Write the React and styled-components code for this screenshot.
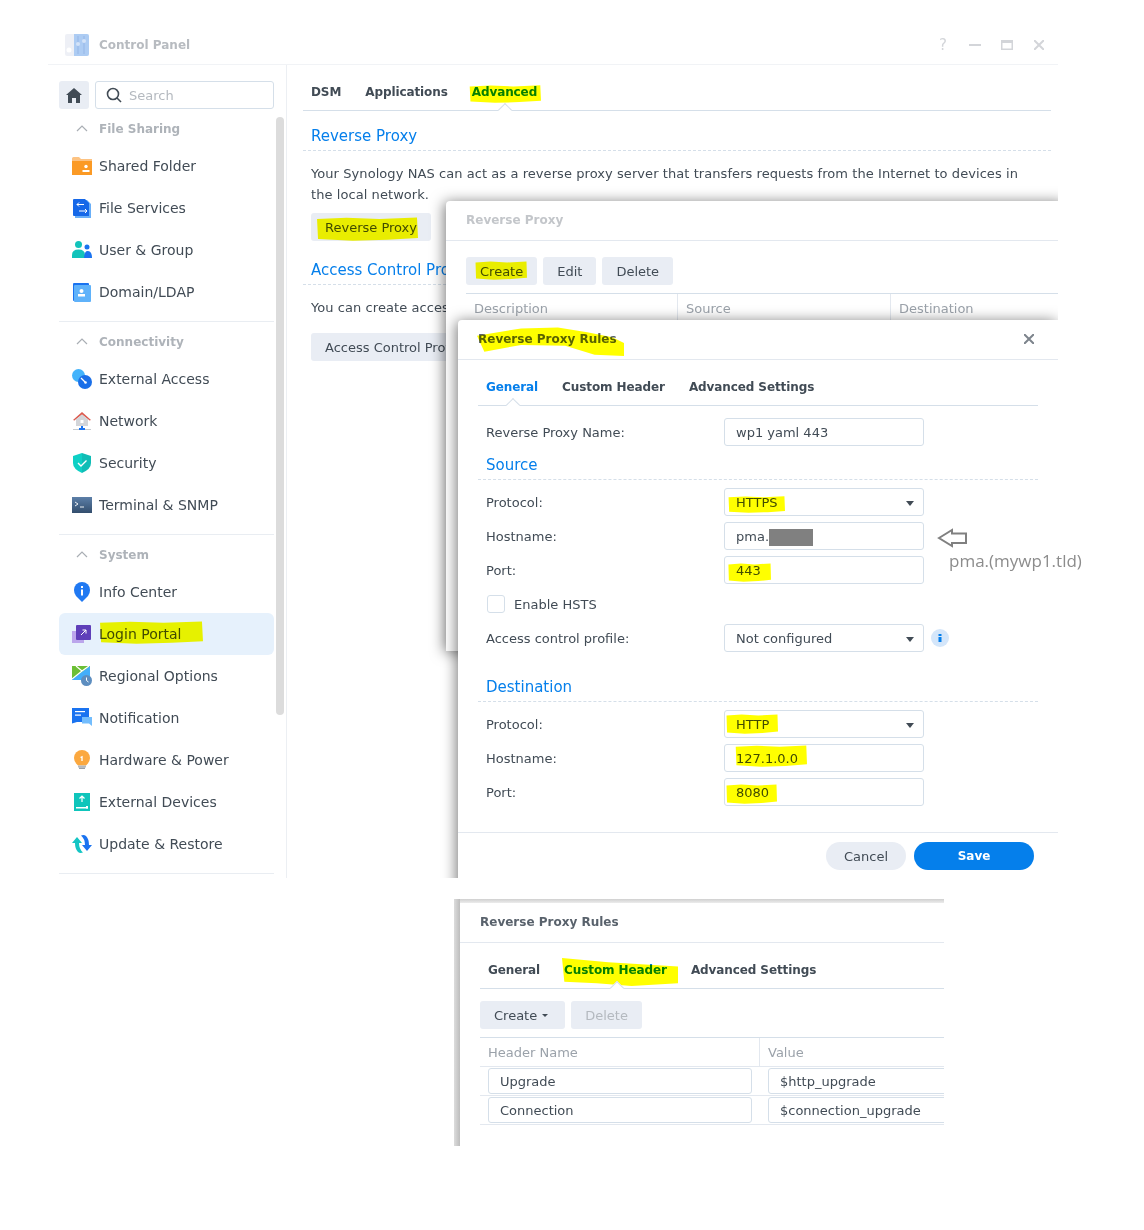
import styled, {createGlobalStyle} from "styled-components";

const GlobalStyle = createGlobalStyle`
  html, body {
    margin: 0;
    padding: 0;
    background: #fff;
  }

  body {
    font-family: "DejaVu Sans", "Liberation Sans", sans-serif;
    font-size: 13px;
    color: #414b55;
  }

  * {
    box-sizing: border-box;
  }
`

const Page = styled.div`
  position: relative;
  width: 1144px;
  height: 1230px;
  padding-top: 25px;
  overflow: hidden;
`

const Window = styled.div`
  position: relative;
  width: 1010px;
  height: 853px;
  margin-left: 48px;
  overflow: hidden;
  background: #fff;
`

const TitleBar = styled.div`
  display: flex;
  align-items: center;
  height: 40px;
  padding: 0 3px 0 17px;
  border-bottom: 1px solid #f1f3f6;
`

const AppTitle = styled.div`
  margin-left: 10px;
  font-size: 12px;
  font-weight: 700;
  color: #b7bbc0;
`

const WinControls = styled.div`
  display: flex;
  margin-left: auto;
`

const WinControl = styled.div`
  display: flex;
  align-items: center;
  justify-content: center;
  width: 32px;
  height: 20px;
  font-size: 15px;
  color: #d3d5d9;
`

const Body = styled.div`
  display: flex;
  height: 813px;
`

const Sidebar = styled.aside`
  position: relative;
  flex: 0 0 239px;
  padding: 16px 12px 0 11px;
  border-right: 1px solid #eceff3;
`

const ScrollThumb = styled.div`
  position: absolute;
  left: 228px;
  top: 52px;
  width: 8px;
  height: 598px;
  border-radius: 4px;
  background: #dcdcdc;
`

const SearchRow = styled.div`
  display: flex;
  gap: 6px;
  height: 28px;
`

const HomeButton = styled.div`
  display: flex;
  align-items: center;
  justify-content: center;
  width: 30px;
  border-radius: 3px;
  background: #e9edf4;
`

const SearchBox = styled.div`
  flex: 1;
  display: flex;
  align-items: center;
  gap: 7px;
  padding-left: 10px;
  border: 1px solid #d5dfe9;
  border-radius: 3px;
  color: #b4b9bf;
`

const NavGroup = styled.div`
  padding-bottom: 8px;
  border-bottom: 1px solid #e9edf2;
`

const NavHeader = styled.div`
  display: flex;
  align-items: center;
  height: 36px;
  padding: 3px 0 0 17px;
  font-size: 12px;
  font-weight: 700;
  color: #aeb3b9;

  svg {
    margin-right: 11px;
  }
`

const NavItem = styled.div`
  display: flex;
  align-items: center;
  gap: 7px;
  height: 42px;
  padding-left: 13px;
  border-radius: 6px;
  font-size: 14px;
  background: ${p => (p.$active ? "#e6f1fc" : "transparent")};
`

const Main = styled.main`
  flex: 1;
  padding: 0 7px 0 16px;
`

const TabBar = styled.div`
  display: flex;
  gap: 8px;
  height: 46px;
  margin: ${p => p.$margin || 0};
  padding-top: 9px;
  border-bottom: 1px solid #d5dfe9;
`

const Tab = styled.div`
  position: relative;
  display: flex;
  align-items: center;
  padding: 0 8px;
  font-size: 12px;
  font-weight: 700;
  letter-spacing: -.1px;
  color: ${p => (p.$blue ? "#057feb" : "#414b55")};

  ${p => p.$active && `
    &::after {
      content: "";
      position: absolute;
      left: 50%;
      bottom: -5px;
      width: 9px;
      height: 9px;
      margin-left: -4px;
      background: #fff;
      border-top: 1px solid #d5dfe9;
      border-left: 1px solid #d5dfe9;
      transform: rotate(45deg);
    }
  `}
`

const Heading = styled.h3`
  height: 34px;
  margin: ${p => p.$top || 0}px 0 0;
  padding: 9px 0 0 8px;
  border-bottom: 1px dashed #d5dfe9;
  font-size: 15px;
  font-weight: 400;
  line-height: 20px;
  color: #057feb;
  white-space: nowrap;
`

const FormHeading = styled(Heading)`
  height: 28px;
  margin-bottom: 8px;
  padding-top: 3px;
`

const Text = styled.p`
  margin: 12px 8px 0;
  letter-spacing: .07px;
  line-height: 21px;
  white-space: ${p => (p.$nowrap ? "nowrap" : "normal")};
`

const Button = styled.div`
  display: inline-flex;
  align-items: center;
  gap: 5px;
  height: 28px;
  padding: 1px 14px 0;
  border-radius: 3px;
  background: #e9edf4;
  color: ${p => (p.$disabled ? "#b4b9bf" : "#414b55")};
  white-space: nowrap;
`

const ButtonSlot = styled.div`
  margin: ${p => p.$top}px 0 0 8px;
`

const Dialog = styled.section`
  position: absolute;
  left: ${p => p.$left}px;
  top: ${p => p.$top}px;
  width: ${p => p.$width}px;
  height: ${p => p.$height}px;
  border-radius: 4px 0 0 0;
  background: #fff;
  box-shadow: -2px 1px 14px rgba(0, 0, 0, .5);
`

const DialogHeader = styled.div`
  display: flex;
  align-items: center;
  justify-content: space-between;
  height: 40px;
  padding: 0 24px 1px 20px;
  border-bottom: 1px solid #e3e8ef;
  font-size: 12px;
  font-weight: 700;
  color: ${p => (p.$dim ? "#c3c6ca" : "#59626c")};
`

const Toolbar = styled.div`
  display: flex;
  gap: 6px;
  padding: ${p => p.$pad};
`

const GridHead = styled.div`
  display: grid;
  grid-template-columns: ${p => p.$cols};
  margin: ${p => p.$margin};
  border-top: 1px solid #d5dfe9;
  border-bottom: ${p => (p.$ruled ? "1px solid #e3e8ef" : "0")};
`

const HeadCell = styled.div`
  height: 28px;
  padding-left: 8px;
  line-height: 30px;
  color: #9ba2aa;
  border-right: 1px solid #e3e8ef;
`

const Form = styled.div`
  margin: 12px 20px 0;
`

const Row = styled.div`
  display: grid;
  grid-template-columns: 246px 200px auto;
  align-items: center;
  height: 28px;
  margin-bottom: 6px;
`

const Label = styled.div`
  padding-left: 8px;
`

const Field = styled.div`
  display: flex;
  align-items: center;
  height: ${p => p.$height || 28}px;
  padding: 2px 11px 0;
  border: 1px solid #d5dfe9;
  border-radius: 3px;
  background: transparent;
  line-height: 20px;
  white-space: nowrap;
`

const Caret = styled.span`
  margin-left: auto;
  margin-right: ${p => p.$small ? 3 : -2}px;
  border-style: solid;
  border-width: ${p => p.$small ? "3px 3px 0" : "5px 4.5px 0"};
  border-color: #414b55 transparent transparent;
`

const Redacted = styled.span`
  display: inline-block;
  width: 44px;
  height: 17px;
  background: #808080;
`

const CheckRow = styled.div`
  display: flex;
  align-items: center;
  gap: 9px;
  height: 28px;
  margin-bottom: 6px;
  padding-left: 9px;
`

const Checkbox = styled.span`
  width: 18px;
  height: 18px;
  border: 1px solid #d5dfe9;
  border-radius: 3px;
`

const InfoDot = styled.span`
  display: block;
  width: 18px;
  height: 18px;
  margin-left: 7px;
`

const Footer = styled.div`
  display: flex;
  justify-content: flex-end;
  gap: 8px;
  margin: ${p => p.$top}px 0 0;
  padding: 9px 24px 0 0;
  border-top: 1px solid #e3e8ef;
`

const Pill = styled.div`
  display: flex;
  align-items: center;
  justify-content: center;
  width: ${p => p.$width}px;
  height: 28px;
  border-radius: 14px;
  background: ${p => (p.$primary ? "#057feb" : "#e9edf4")};
  color: ${p => (p.$primary ? "#fff" : "#414b55")};
  font-size: ${p => (p.$primary ? 12 : 13)}px;
  font-weight: ${p => (p.$primary ? 700 : 400)};
`

const Shot = styled.div`
  width: 490px;
  height: 247px;
  margin: 21px 0 0 454px;
  padding: 4px 0 0 6px;
  overflow: hidden;
  background: linear-gradient(to right, #dcdcdc, #bdbdbd 6px, transparent 6px),
              linear-gradient(to bottom, #d0d0d0, #ececec 4px);
`

const ShotDialog = styled.div`
  width: 600px;
  height: 243px;
  background: #fff;
`

const TableRow = styled.div`
  display: grid;
  grid-template-columns: 280px 300px;
  height: 29px;
  margin-left: 20px;
  padding: 1px 0 0 8px;
  border-bottom: 1px solid #e3e8ef;
`

const RowField = styled(Field)`
  width: ${p => p.$width}px;
`

const Annotation = styled.div`
  position: absolute;
  left: 949px;
  top: 549px;
  font-family: "Open Sans", "Noto Sans", sans-serif;
  font-size: 17px;
  line-height: 24px;
  color: #8c8c8c;
`

const ArrowNote = styled.svg`
  position: absolute;
  left: 936px;
  top: 527px;
`

const Mark = styled.span`
  position: relative;
  display: inline-block;
  line-height: 20px;
`

const Ink = styled.svg`
  position: absolute;
  left: ${p => p.$x}px;
  top: ${p => p.$y}px;
  width: ${p => p.$w}px;
  height: ${p => p.$h}px;
  mix-blend-mode: multiply;
  pointer-events: none;
`

const WOBBLE = "M1 8 L30 3 L62 8 L99 2 L100 88 L70 95 L36 99 L2 92Z"
const SWOOP = "M0 30 L30 5 L55 2 L75 18 L92 35 L100 55 L100 100 L80 96 L60 65 L30 62 L5 85Z"
const SLANT = "M0 0 L40 15 L100 30 L100 90 L60 100 L30 90 L2 85Z"

const Marked = ({x, y, w, h, d = WOBBLE, children}) => (
    <Mark>
        {children}
        <Ink $x={x} $y={y} $w={w} $h={h} viewBox='0 0 100 100' preserveAspectRatio='none'>
            <path d={d} fill='#ffff00'/>
        </Ink>
    </Mark>
)

const Svg = ({children}) => (
    <svg width='20' height='20' viewBox='0 0 20 20'>{children}</svg>
)

const ICONS = {
    folder: <Svg>
        <path d='M0 2.500 Q0 1 1.500 1 H7 L9 3 H20 V18 H0Z' fill='#fdc382'/>
        <path d='M0 5 H20 V19 H0Z' fill='#fb9a25'/>
        <circle cx='14' cy='10.500' r='1.700' fill='#fff'/>
        <rect x='10.500' y='14' width='7' height='2' fill='#fff'/>
    </Svg>,
    files: <Svg>
        <path d='M3 2 H15 L19 6 V20 H3Z' fill='#69aff8'/>
        <path d='M1 2 Q1 1 2 1 H13 L17 5 V18 H2 Q1 18 1 17Z' fill='#1668e8'/>
        <path d='M5 6.500 H12 M5 6.500 L7 4.500 M5 6.500 L7 8.500 M7 13 H15 M15 13 L13 11 M15 13 L13 15' stroke='#fff' strokeWidth='1' fill='none'/>
    </Svg>,
    users: <Svg>
        <circle cx='6.500' cy='4.500' r='3.500' fill='#12c3bb'/>
        <path d='M0 18 V15 Q0 9.500 6.500 9.500 Q13 9.500 13 15 V18Z' fill='#12c3bb'/>
        <circle cx='15' cy='7' r='2.500' fill='#1a73f0'/>
        <path d='M12 18 Q12.500 11 15.500 11 Q20 11 20 18Z' fill='#1a73f0'/>
    </Svg>,
    domain: <Svg>
        <rect x='1' y='1' width='16' height='18' rx='1' fill='#1a73f0'/>
        <rect x='2' y='3' width='17' height='17' rx='1' fill='#5fb2fa'/>
        <circle cx='9.500' cy='9' r='2' fill='#fff'/>
        <rect x='6' y='12' width='7' height='2.500' fill='#fff'/>
    </Svg>,
    access: <Svg>
        <circle cx='6.500' cy='6.500' r='6.500' fill='#43b3fb'/>
        <circle cx='13' cy='13' r='7' fill='#1a6fe8'/>
        <path d='M9 9 L13 13' stroke='#fff' strokeWidth='1.200'/>
        <circle cx='13.500' cy='13.500' r='1.300' fill='#fff'/>
    </Svg>,
    network: <Svg>
        <path d='M4 8 H16 V15 H4Z' fill='#d3d5d9'/>
        <path d='M1 9 L10 1 L19 9 L17.500 9.500 L10 3.500 L2.500 9.500Z' fill='#dc5a4e'/>
        <path d='M10 3.500 L17 9 H3Z' fill='#d3d5d9'/>
        <rect x='8.500' y='9' width='3' height='3' fill='#fff'/>
        <rect x='1' y='18' width='18' height='1' fill='#c6cbd0'/>
        <rect x='9' y='15' width='2' height='2' fill='#1a73f0'/>
        <rect x='7' y='17' width='6' height='2' fill='#1a73f0'/>
    </Svg>,
    security: <Svg>
        <path d='M10 0 L19 3 V10 Q19 16 10 20Z' fill='#10bdb6'/>
        <path d='M10 0 L1 3 V10 Q1 16 10 20Z' fill='#0dd0c5'/>
        <path d='M6 10 L9 13 L14.500 7.500' stroke='#fff' strokeWidth='1.400' fill='none'/>
    </Svg>,
    terminal: <Svg>
        <defs>
            <linearGradient id='term' x1='0' y1='0' x2='0' y2='1'>
                <stop offset='0' stopColor='#5c7fa8'/>
                <stop offset='1' stopColor='#334e6d'/>
            </linearGradient>
        </defs>
        <rect x='0' y='2' width='20' height='16' fill='url(#term)'/>
        <path d='M3 7 L6 9 L3 11 M8 12 H12' stroke='#fff' strokeWidth='.9' fill='none'/>
    </Svg>,
    info: <Svg>
        <path d='M10 20 L4 14 Q2 11.500 2 8 A8 8 0 0 1 18 8 Q18 11.500 16 14Z' fill='#2079f2'/>
        <rect x='9' y='4' width='2' height='2' fill='#fff'/>
        <rect x='9' y='7.500' width='2' height='6' fill='#fff'/>
    </Svg>,
    portal: <Svg>
        <rect x='0' y='7' width='12' height='12' fill='#bba6ec'/>
        <rect x='4' y='1' width='15' height='15' rx='1' fill='#5f3fb9'/>
        <path d='M9 11 L14 6 M10.500 6 H14 V9.500' stroke='#fff' strokeWidth='1' fill='none'/>
    </Svg>,
    regional: <Svg>
        <path d='M0 0 H18 V14 H0Z' fill='#43aefa'/>
        <path d='M0 0 H18 L0 13Z' fill='#6cbf35'/>
        <path d='M5 0 H17 L11 5Z' fill='#6cbf35'/>
        <path d='M4 0 L10 5 M10 5 L17 0 M10 5 L0 13' stroke='#fff' strokeWidth='1.200'/>
        <circle cx='14.500' cy='14.500' r='5.500' fill='#5d8ec0'/>
        <path d='M14.500 11.500 V14.500 L16.500 16' stroke='#fff' strokeWidth='1' fill='none'/>
    </Svg>,
    notify: <Svg>
        <path d='M0 0 H17 V14 H5 L0 15.500Z' fill='#1a73f0'/>
        <rect x='3' y='3' width='10' height='1.200' fill='#fff'/>
        <rect x='3' y='6.500' width='6' height='1.200' fill='#fff'/>
        <path d='M10 9 H20 V18 L17 15.500 H10Z' fill='#73bdfd'/>
    </Svg>,
    bulb: <Svg>
        <path d='M6 15.500 Q2 12 2 8 A8 8 0 0 1 18 8 Q18 12 14 15.500Z' fill='#fba83f'/>
        <rect x='6' y='15.500' width='8' height='2' fill='#b4b9bf'/>
        <rect x='7' y='17.500' width='6' height='1.500' fill='#9aa0a7'/>
        <path d='M8.500 7.500 L10 6.800 V11' stroke='#fff' strokeWidth='1.300' fill='none'/>
    </Svg>,
    device: <Svg>
        <rect x='2' y='1' width='16' height='18' fill='#0fc5bb'/>
        <path d='M10 10 V4 M7.500 6.500 L10 4 L12.500 6.500' stroke='#fff' strokeWidth='1.200' fill='none'/>
        <rect x='4' y='15' width='12' height='1.500' fill='#fff'/>
        <rect x='14' y='14' width='2' height='2.500' fill='#fff'/>
    </Svg>,
    update: <Svg>
        <path d='M5 3 L10 9 H7 Q7 15 11 18.500 Q8 19.500 6 18 Q3 15 3 9 H0Z' fill='#14c5c4'/>
        <path d='M15 17 L10 11 H13 Q13 5 9 1.500 Q12 .500 14 2 Q17 5 17 11 H20Z' fill='#1a73f0'/>
    </Svg>,
}

const CONTROL_ICON = (
    <svg width='24' height='24' viewBox='0 0 24 24' opacity='.5'>
        <rect x='0' y='1' width='24' height='22' rx='2' fill='#dfe3ee'/>
        <path d='M9 1 H22 Q24 1 24 3 V21 Q24 23 22 23 H9Z' fill='#5e9ae8'/>
        <path d='M13 3 V21 M19 3 V21' stroke='#3f7fd8' strokeWidth='1.500'/>
        <circle cx='13' cy='11' r='2' fill='#a9c8f2'/>
        <circle cx='19' cy='8' r='2' fill='#a9c8f2'/>
        <circle cx='4' cy='17' r='2.500' fill='#fff'/>
    </svg>
)

const Chevron = () => (
    <svg width='12' height='7' viewBox='0 0 12 7'>
        <path d='M1 6 L6 1 L11 6' stroke='#a9aeb4' strokeWidth='1.200' fill='none'/>
    </svg>
)

const NAV = [
    {
        title: 'File Sharing',
        items: [
            {icon: 'folder', label: 'Shared Folder'},
            {icon: 'files', label: 'File Services'},
            {icon: 'users', label: 'User & Group'},
            {icon: 'domain', label: 'Domain/LDAP'},
        ],
    },
    {
        title: 'Connectivity',
        items: [
            {icon: 'access', label: 'External Access'},
            {icon: 'network', label: 'Network'},
            {icon: 'security', label: 'Security'},
            {icon: 'terminal', label: 'Terminal & SNMP'},
        ],
    },
    {
        title: 'System',
        items: [
            {icon: 'info', label: 'Info Center'},
            {icon: 'portal', label: 'Login Portal', active: true},
            {icon: 'regional', label: 'Regional Options'},
            {icon: 'notify', label: 'Notification'},
            {icon: 'bulb', label: 'Hardware & Power'},
            {icon: 'device', label: 'External Devices'},
            {icon: 'update', label: 'Update & Restore'},
        ],
    },
]

const SideNav = () => (
    <Sidebar>
        <SearchRow>
            <HomeButton>
                <svg width='16' height='15' viewBox='0 0 16 15'>
                    <path d='M8 0 L16 7 H14 V15 H10 V10 H6 V15 H2 V7 H0Z' fill='#414b55'/>
                </svg>
            </HomeButton>
            <SearchBox>
                <svg width='16' height='16' viewBox='0 0 16 16'>
                    <circle cx='7' cy='7' r='5.500' stroke='#414b55' strokeWidth='1.600' fill='none'/>
                    <path d='M11 11 L15 15' stroke='#414b55' strokeWidth='1.600'/>
                </svg>
                Search
            </SearchBox>
        </SearchRow>
        {NAV.map(group => (
            <NavGroup key={group.title}>
                <NavHeader><Chevron/>{group.title}</NavHeader>
                {group.items.map(item => (
                    <NavItem key={item.label} $active={item.active}>
                        {ICONS[item.icon]}
                        {item.active
                            ? <Marked x={0} y={-3} w={104} h={23}>{item.label}</Marked>
                            : item.label}
                    </NavItem>
                ))}
            </NavGroup>
        ))}
        <ScrollThumb/>
    </Sidebar>
)

const RulesDialog = () => (
    <Dialog $left={410} $top={295} $width={600} $height={620}>
        <DialogHeader>
            <Marked x={-1} y={-2} w={147} h={29} d={SWOOP}>Reverse Proxy Rules</Marked>
            <svg width='10' height='10' viewBox='0 0 10 10'>
                <path d='M0 0 L10 10 M10 0 L0 10' stroke='#7d848c' strokeWidth='2'/>
            </svg>
        </DialogHeader>
        <TabBar $margin='0 20px'>
            <Tab $active $blue>General</Tab>
            <Tab>Custom Header</Tab>
            <Tab>Advanced Settings</Tab>
        </TabBar>
        <Form>
            <Row>
                <Label>Reverse Proxy Name:</Label>
                <Field>wp1 yaml 443</Field>
            </Row>
            <FormHeading>Source</FormHeading>
            <Row>
                <Label>Protocol:</Label>
                <Field><Marked x={-8} y={3} w={57} h={17}>HTTPS</Marked><Caret/></Field>
            </Row>
            <Row>
                <Label>Hostname:</Label>
                <Field>pma.<Redacted/></Field>
            </Row>
            <Row>
                <Label>Port:</Label>
                <Field><Marked x={-8} y={2} w={43} h={19}>443</Marked></Field>
            </Row>
            <CheckRow>
                <Checkbox/>
                Enable HSTS
            </CheckRow>
            <Row>
                <Label>Access control profile:</Label>
                <Field>Not configured<Caret/></Field>
                <InfoDot>
                    <svg width='18' height='18' viewBox='0 0 18 18'>
                        <circle cx='9' cy='9' r='9' fill='#d4e6fa'/>
                        <rect x='7.500' y='8' width='3' height='5' fill='#057feb'/>
                        <rect x='7.500' y='5' width='3' height='2' fill='#057feb'/>
                    </svg>
                </InfoDot>
            </Row>
            <FormHeading $top={22}>Destination</FormHeading>
            <Row>
                <Label>Protocol:</Label>
                <Field><Marked x={-10} y={-1} w={52} h={20}>HTTP</Marked><Caret/></Field>
            </Row>
            <Row>
                <Label>Hostname:</Label>
                <Field><Marked x={-1} y={-4} w={72} h={22}>127.1.0.0</Marked></Field>
            </Row>
            <Row>
                <Label>Port:</Label>
                <Field><Marked x={-10} y={1} w={51} h={20}>8080</Marked></Field>
            </Row>
        </Form>
        <Footer $top={26}>
            <Pill $width={80}>Cancel</Pill>
            <Pill $width={120} $primary>Save</Pill>
        </Footer>
    </Dialog>
)

const App = () => {
    return (
        <Page>
            <GlobalStyle/>
            <Window>
                <TitleBar>
                    {CONTROL_ICON}
                    <AppTitle>Control Panel</AppTitle>
                    <WinControls>
                        <WinControl>?</WinControl>
                        <WinControl>
                            <svg width='12' height='2' viewBox='0 0 12 2'><rect width='12' height='2' fill='#d3d5d9'/></svg>
                        </WinControl>
                        <WinControl>
                            <svg width='12' height='10' viewBox='0 0 12 10'>
                                <path d='M0 0 H12 V10 H0Z M1.500 3 V8.500 H10.500 V3Z' fill='#d3d5d9' fillRule='evenodd'/>
                            </svg>
                        </WinControl>
                        <WinControl>
                            <svg width='10' height='10' viewBox='0 0 10 10'>
                                <path d='M0 0 L10 10 M10 0 L0 10' stroke='#d3d5d9' strokeWidth='2'/>
                            </svg>
                        </WinControl>
                    </WinControls>
                </TitleBar>
                <Body>
                    <SideNav/>
                    <Main>
                        <TabBar>
                            <Tab>DSM</Tab>
                            <Tab>Applications</Tab>
                            <Tab $active $blue>
                                <Marked x={-3} y={3} w={72} h={18}>Advanced</Marked>
                            </Tab>
                        </TabBar>
                        <Heading $top={6}>Reverse Proxy</Heading>
                        <Text>
                            Your Synology NAS can act as a reverse proxy server that transfers requests from the Internet to devices in the local network.
                        </Text>
                        <ButtonSlot $top={8}>
                            <Button><Marked x={-9} y={-1} w={102} h={24}>Reverse Proxy</Marked></Button>
                        </ButtonSlot>
                        <Heading $top={10}>Access Control Profile</Heading>
                        <Text $nowrap>You can create acces</Text>
                        <ButtonSlot $top={15}>
                            <Button>Access Control Profile</Button>
                        </ButtonSlot>
                    </Main>
                </Body>
                <Dialog $left={398} $top={176} $width={620} $height={450}>
                    <DialogHeader $dim>Reverse Proxy</DialogHeader>
                    <Toolbar $pad='16px 20px 0'>
                        <Button><Marked x={-5} y={-1} w={52} h={19}>Create</Marked></Button>
                        <Button>Edit</Button>
                        <Button>Delete</Button>
                    </Toolbar>
                    <GridHead $cols='212px 213px 200px' $margin='8px 0 0 20px'>
                        <HeadCell>Description</HeadCell>
                        <HeadCell>Source</HeadCell>
                        <HeadCell>Destination</HeadCell>
                    </GridHead>
                </Dialog>
                <RulesDialog/>
            </Window>

            <Annotation>pma.(mywp1.tld)</Annotation>
            <ArrowNote width='34' height='22' viewBox='0 0 34 22'>
                <path d='M3 11 L16 3 V6.500 H30 V16 H16 V19Z' stroke='#808080' strokeWidth='2' fill='#fff'/>
            </ArrowNote>

            <Shot>
                <ShotDialog>
                    <DialogHeader>Reverse Proxy Rules</DialogHeader>
                    <TabBar $margin='0 0 0 20px'>
                        <Tab>General</Tab>
                        <Tab $active $blue>
                            <Marked x={-2} y={-2} w={116} h={28} d={SLANT}>Custom Header</Marked>
                        </Tab>
                        <Tab>Advanced Settings</Tab>
                    </TabBar>
                    <Toolbar $pad='12px 0 0 20px'>
                        <Button>Create<Caret $small/></Button>
                        <Button $disabled>Delete</Button>
                    </Toolbar>
                    <GridHead $cols='280px 300px' $margin='8px 0 0 20px' $ruled>
                        <HeadCell>Header Name</HeadCell>
                        <HeadCell>Value</HeadCell>
                    </GridHead>
                    <TableRow>
                        <RowField $height={26} $width={264}>Upgrade</RowField>
                        <RowField $height={26} $width={264}>$http_upgrade</RowField>
                    </TableRow>
                    <TableRow>
                        <RowField $height={26} $width={264}>Connection</RowField>
                        <RowField $height={26} $width={264}>$connection_upgrade</RowField>
                    </TableRow>
                </ShotDialog>
            </Shot>
        </Page>
    )
}

export default App;
